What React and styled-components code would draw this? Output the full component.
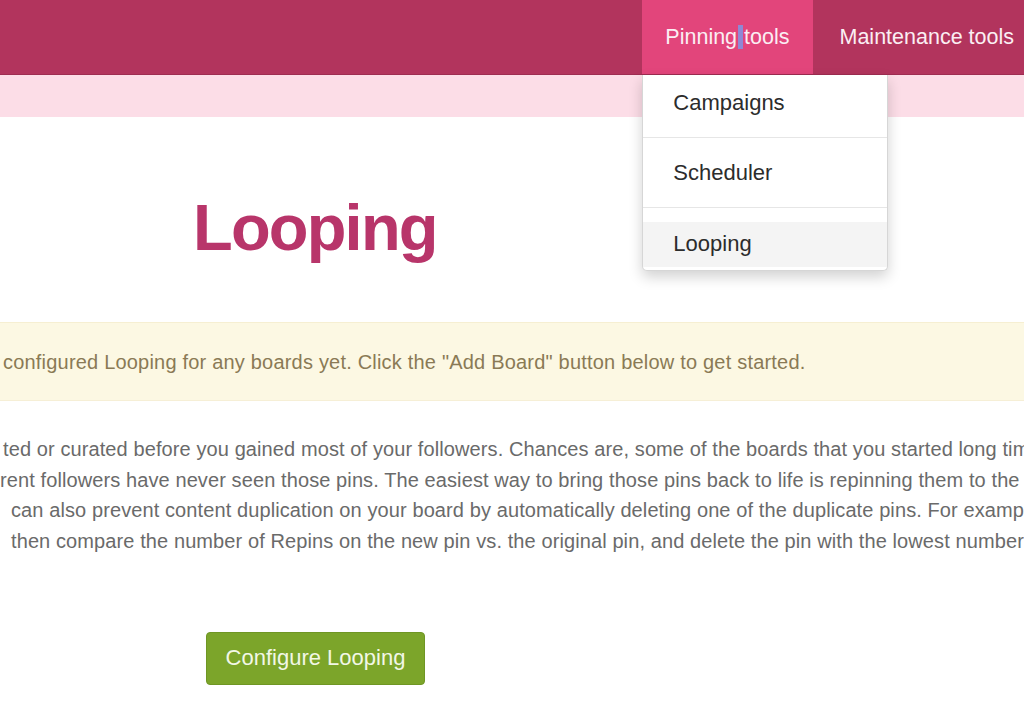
import React from "react";
import styled, { createGlobalStyle } from "styled-components";

const GlobalStyle = createGlobalStyle`
  html, body {
    margin: 0;
    padding: 0;
    background: #ffffff;
    overflow: hidden;
  }
  body {
    font-family: "Liberation Sans", Arial, sans-serif;
    width: 1024px;
    height: 714px;
  }
`;

const navItems = [
  { id: 1, label: "Pinning", rest: "tools", active: true },
  { id: 2, label: "Maintenance tools", active: false },
];

const menuItems = [
  { id: 1, label: "Campaigns", height: 62, gap: 0, lift: 6 },
  { id: 2, label: "Scheduler", height: 69, gap: 0, lift: 0 },
  { id: 3, label: "Looping", height: 45, gap: 14, lift: 1, hover: true },
];

const paragraphLines = [
  { id: 1, indent: 3, text: "ted or curated before you gained most of your followers. Chances are, some of the boards that you started long time" },
  { id: 2, indent: 0, text: "rent followers have never seen those pins. The easiest way to bring those pins back to life is repinning them to the" },
  { id: 3, indent: 11, text: "can also prevent content duplication on your board by automatically deleting one of the duplicate pins. For example" },
  { id: 4, indent: 11, text: "then compare the number of Repins on the new pin vs. the original pin, and delete the pin with the lowest number" },
];

const App = () => {
  return (
    <Page>
      <GlobalStyle />
      <Header>
        <Nav>
          {navItems.map((item) => (
            <NavItem key={item.id} $active={item.active}>
              {item.rest ? (
                <>
                  {item.label}
                  <Selection> </Selection>
                  {item.rest}
                </>
              ) : (
                item.label
              )}
              {item.active && (
                <Dropdown>
                  {menuItems.map((m) => (
                    <MenuRow key={m.id} $gap={m.gap}>
                      <MenuItem $height={m.height} $lift={m.lift} $hover={m.hover}>
                        {m.label}
                      </MenuItem>
                    </MenuRow>
                  ))}
                </Dropdown>
              )}
            </NavItem>
          ))}
        </Nav>
      </Header>
      <Band />
      <Main>
        <Title>Looping</Title>
        <Alert>
          configured Looping for any boards yet. Click the "Add Board" button below to get started.
        </Alert>
        <Description>
          {paragraphLines.map((line) => (
            <Line key={line.id} $indent={line.indent}>
              {line.text}
            </Line>
          ))}
        </Description>
        <Actions>
          <Button type="button">Configure Looping</Button>
        </Actions>
      </Main>
    </Page>
  );
};

export default App;

const Page = styled.div`
  width: 1024px;
  height: 714px;
  overflow: hidden;
`;

const Header = styled.header`
  height: 74px;
  background: #b2345d;
  border-bottom: 1px solid #9e2c51;
  display: flex;
  justify-content: flex-end;
`;

const Nav = styled.nav`
  display: flex;
  height: 100%;
`;

const NavItem = styled.div`
  position: relative;
  display: flex;
  align-items: center;
  height: 100%;
  padding: 0 ${(p) => (p.$active ? "23px" : "10px")} 0 ${(p) => (p.$active ? "23px" : "27px")};
  background: ${(p) => (p.$active ? "#e2457b" : "transparent")};
  color: #fbeef3;
  font-size: 21.5px;
  white-space: nowrap;
`;

const Selection = styled.span`
  background: #8f88d4;
  display: inline-block;
  width: 5px;
  height: 24px;
  margin: 0 1px;
`;

const Dropdown = styled.div`
  position: absolute;
  top: 75px;
  left: 0;
  width: 244px;
  background: #ffffff;
  border: 1px solid #d6d6d6;
  border-top: none;
  border-radius: 0 0 5px 5px;
  box-shadow: 0 6px 14px rgba(0, 0, 0, 0.18);
  padding-bottom: 3px;
  z-index: 10;
  overflow: hidden;
`;

const MenuRow = styled.div`
  padding-top: ${(p) => p.$gap}px;
  border-bottom: 1px solid #e6e6e6;

  &:last-child {
    border-bottom: none;
  }
`;

const MenuItem = styled.div`
  box-sizing: border-box;
  height: ${(p) => p.$height}px;
  display: flex;
  align-items: center;
  padding: 0 0 ${(p) => p.$lift}px 30px;
  background: ${(p) => (p.$hover ? "#f4f4f4" : "#ffffff")};
  color: #2c2c2c;
  font-size: 22px;
`;

const Band = styled.div`
  height: 42px;
  background: #fcdde7;
`;

const Main = styled.main`
  display: flex;
  flex-direction: column;
`;

const Title = styled.h1`
  margin: 77px 0 0 193px;
  font-size: 65px;
  line-height: 68px;
  font-weight: 700;
  color: #b8356a;
  letter-spacing: -1.8px;
`;

const Alert = styled.div`
  margin-top: 60px;
  height: 79px;
  box-sizing: border-box;
  display: flex;
  align-items: center;
  padding: 2px 0 0 3px;
  background: #fcf8e3;
  border-top: 1px solid #f6efd2;
  border-bottom: 1px solid #f6efd6;
  color: #8a7a55;
  font-size: 20px;
  letter-spacing: 0.2px;
  white-space: nowrap;
`;

const Description = styled.div`
  margin-top: 33px;
  display: flex;
  flex-direction: column;
`;

const Line = styled.div`
  padding-left: ${(p) => p.$indent}px;
  height: 30.7px;
  line-height: 30.7px;
  color: #6a6a6a;
  font-size: 20px;
  letter-spacing: 0.1px;
  white-space: nowrap;
`;

const Actions = styled.div`
  margin-top: 75px;
  padding-left: 206px;
  display: flex;
`;

const Button = styled.button`
  width: 219px;
  height: 53px;
  background: #7ca52a;
  border: 1px solid #6f9624;
  border-radius: 4px;
  color: #f2f7e6;
  font-family: "Liberation Sans", Arial, sans-serif;
  font-size: 22px;
  padding: 0;
  cursor: pointer;
`;
